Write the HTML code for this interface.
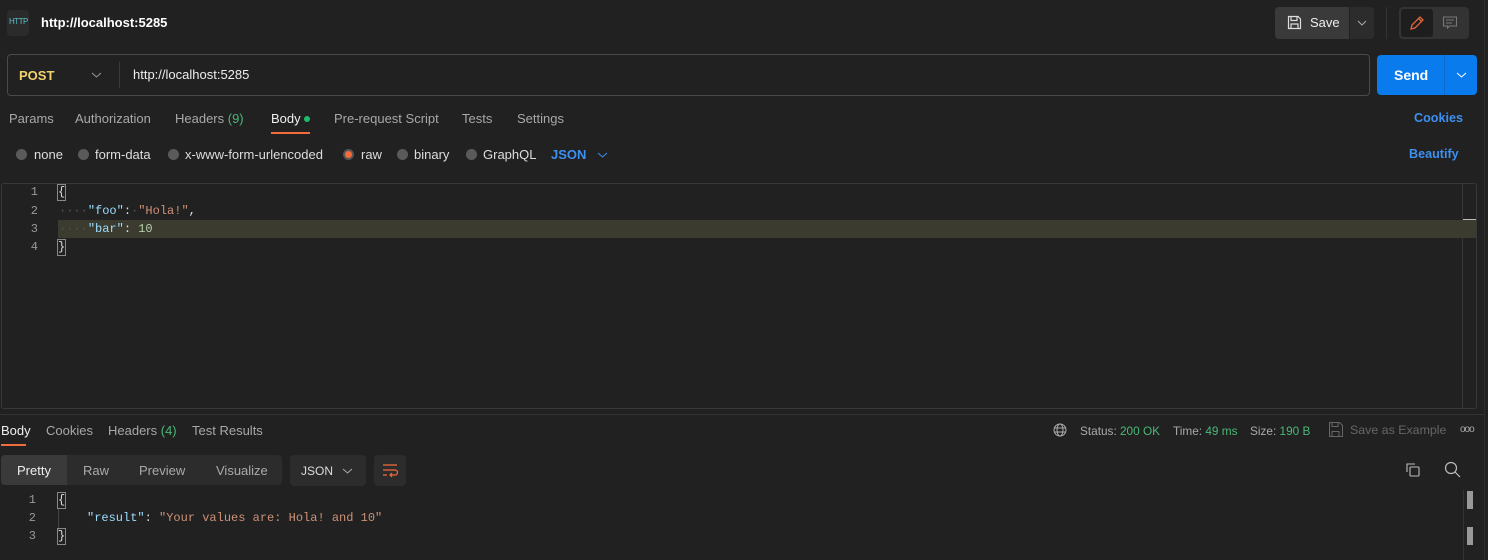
<!DOCTYPE html>
<html><head><meta charset="utf-8"><style>
*{box-sizing:border-box;margin:0;padding:0}
body{width:1488px;height:560px;background:#212121;font-family:"Liberation Sans",sans-serif;color:#ccc;position:relative;overflow:hidden;font-size:13px}
.a{position:absolute;white-space:nowrap}
.mono{font-family:"Liberation Mono",monospace;font-size:12px}
.ln{color:#999;width:20px;text-align:right}
.k{color:#9cdcfe}.s{color:#ce9178}.n{color:#b5cea8}
.dot{width:11px;height:11px;border-radius:50%;background:#5a5a5a;top:149px}
</style></head><body>
<!-- header -->
<div class="a" style="left:7px;top:10px;width:22px;height:26px;background:#2b2b2b;border-radius:4px"></div>
<div class="a" style="left:9px;top:17px;font-size:8px;color:#5bc0c9;letter-spacing:-0.5px">HTTP</div>
<div class="a" style="left:41px;top:15px;font-weight:bold;color:#fff;font-size:13px">http://localhost:5285</div>
<div class="a" style="left:1275px;top:7px;width:74px;height:32px;background:#3a3a3a;border-radius:4px 0 0 4px"></div>
<svg class="a" style="left:1287px;top:15px" width="15" height="15" viewBox="0 0 15 15" fill="none" stroke="#ddd" stroke-width="1.2"><path d="M1.5 1.5h9.5l2.5 2.5v9.5h-12z M4 1.5v4h6v-4 M4 13.5v-4.5h7v4.5"/></svg>
<div class="a" style="left:1310px;top:15px;color:#eee;font-size:13px">Save</div>
<div class="a" style="left:1350px;top:7px;width:24px;height:32px;background:#2c2c2c;border-radius:0 4px 4px 0"></div>
<svg class="a" style="left:1357px;top:19px" width="10" height="8"><path d="M1 2l4 4 4-4" stroke="#aaa" fill="none"/></svg>
<div class="a" style="left:1386px;top:7px;width:1px;height:32px;background:#333"></div>
<div class="a" style="left:1399px;top:7px;width:70px;height:32px;background:#333;border-radius:4px"></div>
<div class="a" style="left:1401px;top:9px;width:32px;height:28px;background:#1e1e1e;border-radius:3px"></div>
<svg class="a" style="left:1409px;top:15px" width="16" height="16" viewBox="0 0 16 16" fill="none" stroke="#e0643a" stroke-width="1.3"><path d="M2 14l1-4 8-8 3 3-8 8z M9.5 3.5l3 3"/></svg>
<svg class="a" style="left:1442px;top:15px" width="16" height="16" viewBox="0 0 16 16" fill="none" stroke="#777" stroke-width="1.1"><path d="M1.5 2h13v9h-7l-2 2v-2h-4z M4 5h8 M4 8h6"/></svg>
<!-- url bar -->
<div class="a" style="left:7px;top:54px;width:1363px;height:42px;border:1px solid #4a4a4a;border-radius:4px"></div>
<div class="a" style="left:19px;top:68px;font-weight:bold;color:#f2d36b;font-size:13px">POST</div>
<svg class="a" style="left:91px;top:71px" width="11" height="8"><path d="M1 2l4.5 4 4.5-4" stroke="#999" fill="none"/></svg>
<div class="a" style="left:119px;top:62px;width:1px;height:26px;background:#3a3a3a"></div>
<div class="a" style="left:133px;top:67px;color:#eee;font-size:13px">http://localhost:5285</div>
<div class="a" style="left:1377px;top:55px;width:100px;height:40px;background:#097bed;border-radius:4px"></div>
<div class="a" style="left:1444px;top:55px;width:1px;height:40px;background:#0a6ad0"></div>
<div class="a" style="left:1394px;top:67px;font-weight:bold;color:#fff;font-size:14px">Send</div>
<svg class="a" style="left:1456px;top:71px" width="11" height="8"><path d="M1 2l4.5 4 4.5-4" stroke="#fff" fill="none"/></svg>
<!-- tabs -->
<div class="a" style="top:111px;left:9px;color:#a8a8a8">Params</div>
<div class="a" style="top:111px;left:75px;color:#a8a8a8">Authorization</div>
<div class="a" style="top:111px;left:175px;color:#a8a8a8">Headers <span style="color:#49b977">(9)</span></div>
<div class="a" style="top:111px;left:271px;color:#f0f0f0">Body</div>
<div class="a" style="top:116px;left:304px;width:6px;height:6px;border-radius:50%;background:#1fba6a"></div>
<div class="a" style="top:132px;left:271px;width:39px;height:2px;background:#f26b3a"></div>
<div class="a" style="top:111px;left:334px;color:#a8a8a8">Pre-request Script</div>
<div class="a" style="top:111px;left:462px;color:#a8a8a8">Tests</div>
<div class="a" style="top:111px;left:517px;color:#a8a8a8">Settings</div>
<div class="a" style="top:111px;left:1414px;color:#3d8ff0;font-weight:bold;font-size:12.6px">Cookies</div>
<!-- body types -->
<div class="a dot" style="left:16px"></div><div class="a" style="top:147px;left:34px;color:#ddd">none</div>
<div class="a dot" style="left:78px"></div><div class="a" style="top:147px;left:95px;color:#ddd">form-data</div>
<div class="a dot" style="left:168px"></div><div class="a" style="top:147px;left:185px;color:#ddd">x-www-form-urlencoded</div>
<div class="a dot" style="left:343px;background:#f26b3a;border:2px solid #555"></div><div class="a" style="top:147px;left:361px;color:#ddd">raw</div>
<div class="a dot" style="left:397px"></div><div class="a" style="top:147px;left:414px;color:#ddd">binary</div>
<div class="a dot" style="left:466px"></div><div class="a" style="top:147px;left:483px;color:#ddd">GraphQL</div>
<div class="a" style="top:147px;left:551px;color:#3d8ff0;font-weight:bold">JSON</div>
<svg class="a" style="left:597px;top:151px" width="11" height="8"><path d="M1 2l4.5 4 4.5-4" stroke="#3d8ff0" fill="none"/></svg>
<div class="a" style="top:147px;left:1409px;color:#3d8ff0;font-weight:bold;font-size:12.6px">Beautify</div>
<!-- editor -->
<div class="a" style="left:1px;top:183px;width:1476px;height:226px;border:1px solid #383838;border-radius:3px"></div>
<div class="a" style="left:1462px;top:184px;width:1px;height:224px;background:#383838"></div>
<div class="a" style="left:1463px;top:219px;width:13px;height:2px;background:#bbb"></div>
<div class="a" style="left:1484px;top:0;width:1px;height:560px;background:#2c2c2c"></div>
<div class="a" style="left:58px;top:220px;width:1418px;height:18px;background:#3b3b30"></div>
<div class="a mono ln" style="left:18px;top:185px">1</div>
<div class="a mono ln" style="left:18px;top:204px">2</div>
<div class="a mono ln" style="left:18px;top:222px">3</div>
<div class="a mono ln" style="left:18px;top:240px">4</div>
<div class="a mono" style="left:58px;top:185px;color:#ddd;outline:1px solid #888;width:7px;height:15px;line-height:15px">{</div>
<div class="a mono" style="left:59px;top:204px;color:#ddd"><span style="color:#555">····</span><span class="k">"foo"</span>:<span style="color:#555">·</span><span class="s">"Hola!"</span>,</div>
<div class="a mono" style="left:59px;top:222px;color:#ddd"><span style="color:#555">····</span><span class="k">"bar"</span>: <span class="n">10</span></div>
<div class="a mono" style="left:58px;top:240px;color:#ddd;outline:1px solid #888;width:7px;height:15px;line-height:15px">}</div>
<!-- response -->
<div class="a" style="left:0;top:414px;width:1484px;height:1px;background:#333"></div>
<div class="a" style="top:423px;left:1px;color:#f0f0f0">Body</div>
<div class="a" style="top:444px;left:1px;width:25px;height:2px;background:#f26b3a"></div>
<div class="a" style="top:423px;left:46px;color:#a8a8a8">Cookies</div>
<div class="a" style="top:423px;left:108px;color:#a8a8a8">Headers <span style="color:#49b977">(4)</span></div>
<div class="a" style="top:423px;left:192px;color:#a8a8a8">Test Results</div>
<svg class="a" style="left:1053px;top:423px" width="14" height="14" viewBox="0 0 14 14" fill="none" stroke="#aaa"><circle cx="7" cy="7" r="6"/><ellipse cx="7" cy="7" rx="3" ry="6"/><path d="M1 5h12M1 9h12"/></svg>
<div class="a" style="top:424px;left:1080px;font-size:11.8px;color:#aaa">Status: <span style="color:#49b977">200 OK</span></div>
<div class="a" style="top:424px;left:1173px;font-size:11.8px;color:#aaa">Time: <span style="color:#49b977">49 ms</span></div>
<div class="a" style="top:424px;left:1250px;font-size:11.8px;color:#aaa">Size: <span style="color:#49b977">190 B</span></div>
<svg class="a" style="left:1329px;top:422px" width="14" height="15" viewBox="0 0 14 15" fill="none" stroke="#666"><path d="M0.5 0.5h10l3 3v11h-13z M3 0.5v4h6v-4 M3 14.5v-5h7v5"/></svg>
<div class="a" style="top:423px;left:1350px;color:#666;font-size:12.4px">Save as Example</div>
<div class="a" style="top:424px;left:1460px;color:#aaa;font-size:10px;letter-spacing:-1px">ooo</div>
<div class="a" style="left:1px;top:455px;width:281px;height:30px;background:#2c2c2c;border-radius:4px"></div>
<div class="a" style="left:1px;top:455px;width:66px;height:30px;background:#3a3a3a;border-radius:4px 0 0 4px"></div>
<div class="a" style="top:463px;left:17px;color:#eee">Pretty</div>
<div class="a" style="top:463px;left:83px;color:#aaa">Raw</div>
<div class="a" style="top:463px;left:139px;color:#aaa">Preview</div>
<div class="a" style="top:463px;left:216px;color:#aaa">Visualize</div>
<div class="a" style="left:290px;top:455px;width:76px;height:31px;background:#2c2c2c;border-radius:4px"></div>
<div class="a" style="top:464px;left:301px;color:#ddd;font-size:12px">JSON</div>
<svg class="a" style="left:342px;top:467px" width="11" height="8"><path d="M1 2l4.5 4 4.5-4" stroke="#aaa" fill="none"/></svg>
<div class="a" style="left:374px;top:455px;width:32px;height:31px;background:#2c2c2c;border-radius:4px"></div>
<svg class="a" style="left:381px;top:462px" width="18" height="16" viewBox="0 0 18 16" fill="none" stroke="#f26b3a" stroke-width="1.2"><path d="M2 3h14 M2 8h12a2.5 2.5 0 0 1 0 5h-4 M11 11l-2 2 2 2 M2 13h4"/></svg>
<svg class="a" style="left:1405px;top:462px" width="16" height="16" viewBox="0 0 16 16" fill="none" stroke="#bbb" stroke-width="1.1"><path d="M2 10V2h8"/><rect x="5" y="5" width="9" height="9" rx="1"/></svg>
<svg class="a" style="left:1444px;top:461px" width="17" height="17" viewBox="0 0 17 17" fill="none" stroke="#bbb" stroke-width="1.2"><circle cx="7" cy="7" r="5.5"/><path d="M11 11l5 5"/></svg>
<div class="a" style="left:1467px;top:491px;width:6px;height:18px;background:#999"></div>
<div class="a" style="left:1467px;top:527px;width:6px;height:18px;background:#999"></div>
<div class="a" style="left:1463px;top:490px;width:1px;height:70px;background:#333"></div>
<div class="a mono ln" style="left:16px;top:493px">1</div>
<div class="a mono ln" style="left:16px;top:511px">2</div>
<div class="a mono ln" style="left:16px;top:529px">3</div>
<div class="a" style="left:58px;top:508px;width:1px;height:24px;background:#444"></div>
<div class="a mono" style="left:58px;top:493px;color:#ddd;outline:1px solid #888;width:7px;height:15px;line-height:15px">{</div>
<div class="a mono" style="left:87px;top:511px;color:#ddd"><span class="k">"result"</span>: <span class="s">"Your values are: Hola! and 10"</span></div>
<div class="a mono" style="left:58px;top:529px;color:#ddd;outline:1px solid #888;width:7px;height:15px;line-height:15px">}</div>
</body></html>
